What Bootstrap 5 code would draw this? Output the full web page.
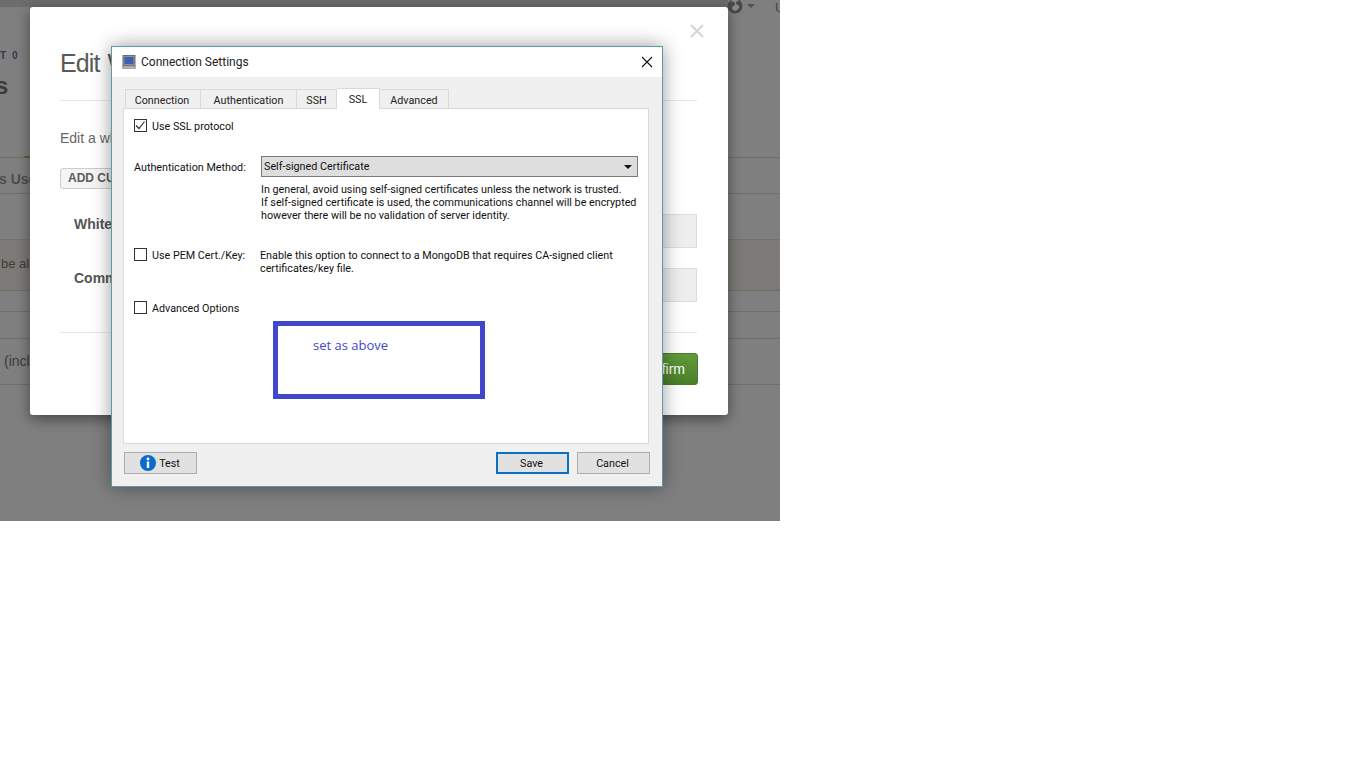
<!DOCTYPE html>
<html lang="en">
<head>
<meta charset="utf-8">
<title>Connection Settings</title>
<link rel="stylesheet" href="https://cdn.jsdelivr.net/npm/bootstrap@5.3.0/dist/css/bootstrap.min.css">
<style>
html,body{margin:0;background:#fff;}
.desk{position:relative;width:780px;height:521px;background:#7f7f7f;overflow:hidden;font-family:"Liberation Sans",sans-serif;color:#444;}
.bg-topline{height:7px;width:728px;background:#6c6c6c;}
.bg-item{position:absolute;left:0;right:0;height:1px;background:#6d6d6d;}
.bg-green{position:absolute;left:24px;top:156px;width:6px;height:2px;background:#4c6b33;}
.bg-band{position:absolute;left:0;right:0;top:239px;height:52px;background:#7c7a76;border-top:1px solid #76716a;border-bottom:1px solid #77695f;}
.bg-txt{position:absolute;color:#3b3b3b;white-space:nowrap;line-height:1;}
.bg-globe{position:absolute;left:727px;top:-1px;}
.site-modal{position:absolute;left:30px;top:7px;width:698px;height:408px;background:#fff;border-radius:3px;box-shadow:0 4px 14px rgba(0,0,0,.45);padding:30px 31px 0 30px;}
.m-title{font-family:"Liberation Sans",sans-serif;font-size:25px;line-height:1;color:#5a5a5a;margin:14px 0 0;font-weight:400;height:50px;border-bottom:1px solid #e8e8e8;letter-spacing:-.9px;word-spacing:2px;}
.m-close{position:absolute;right:24px;top:17px;}
.m-desc{font-size:14px;color:#666;margin:27px 0 0;line-height:20px;}
.m-add{display:inline-block;margin-top:20px;font-size:12px;font-weight:700;color:#5c5c5c;border:1px solid #ccc;background:#f4f4f4;border-radius:3px;padding:0 7px;height:21px;line-height:19px;}
.m-row{display:flex;justify-content:space-between;align-items:flex-start;padding-left:14px;}
.m-row b{font-size:14px;font-weight:700;color:#555;line-height:20px;}
.m-input{width:220px;height:34px;background:#eee;border:1px solid #ddd;}
.m-rows{margin-top:25px;display:flex;flex-direction:column;gap:20px;}
.m-foot{margin-top:30px;border-top:1px solid #e8e8e8;display:flex;justify-content:flex-end;padding-top:20px;}
.m-confirm{width:90px;height:32px;margin-right:-1px;background:linear-gradient(#619a3a,#4a7f2a);color:#fff;border:1px solid #4a7a2c;border-radius:3px;font-size:14px;text-align:right;padding:0 12px;line-height:30px;}
.dlg{position:absolute;left:111px;top:46px;width:552px;height:441px;background:#f0f0f0;border:1px solid #5e9aa3;box-shadow:0 0 18px rgba(0,0,0,.4);display:flex;flex-direction:column;font-family:"Roboto","Noto Sans",sans-serif;color:#111;font-size:10.75px;}
.dlg-head{height:30px;background:#fff;display:flex;align-items:center;padding:0 10px;gap:5px;flex:none;}
.dlg-head .dlg-ttl{font-size:12px;color:#222;}
.dlg-x{margin-left:auto;margin-right:-1px;}
.dlg-body{flex:1;padding:11px 13px 0 11px;display:flex;flex-direction:column;}
.dlg-tabs{display:flex;list-style:none;margin:0 0 0 2px;padding:0;height:20px;align-items:flex-end;position:relative;z-index:1;}
.dlg-tabs li{height:19px;background:#f0f0f0;border:1px solid #d9d9d9;border-bottom:0;border-left-width:0;text-align:center;line-height:22px;color:#222;}
.dlg-tabs li:first-child{border-left-width:1px;padding-right:2px;}
.dlg-tabs li.on{height:21px;background:#fff;margin-bottom:-1px;border-left:0;line-height:22px;}
.dlg-pane{height:336px;background:#fff;border:1px solid #d9d9d9;padding:10px 10px 0 10px;position:relative;}
.ck{display:flex;align-items:flex-start;gap:5px;margin:0;line-height:16px;height:14px;white-space:nowrap;}
.ck input{appearance:none;width:13px;height:13px;border:1px solid #333;background:#fff;margin:0;flex:none;}
.ck input:checked{background:#fff url("data:image/svg+xml,%3Csvg xmlns='http://www.w3.org/2000/svg' viewBox='0 0 13 13'%3E%3Cpath d='M2 6.5 5 9.5 10.5 2.5' fill='none' stroke='%23333' stroke-width='1.2'/%3E%3C/svg%3E") center/13px no-repeat;}
.row-auth{display:flex;margin-top:23px;}
.lbl-col{width:127px;flex:none;line-height:18px;white-space:nowrap;padding-top:3px;}
.fake-sel{height:21px;width:377px;background:#dedede;border:1px solid #7a7a7a;padding:1px 2px 0;line-height:20px;display:flex;align-items:center;justify-content:space-between;color:#111;}
.caret-dn{width:0;height:0;border-left:4px solid transparent;border-right:4px solid transparent;border-top:4px solid #111;margin:-1px 3px 0 0;}
.note{line-height:13px;margin:6px 0 0;white-space:nowrap;}
.row-pem{display:flex;margin-top:26px;}
.row-pem .note{margin:0;padding-top:1px;}
.row-pem .ck{width:126px;flex:none;}
.ck-adv{margin-top:26px;}
.note-box{position:absolute;left:149px;top:212px;width:212px;height:78px;border:5px solid #3f48cc;color:#3f48cc;font-family:"Open Sans",sans-serif;font-size:13px;padding:10px 0 0 35px;line-height:18px;}
.dlg-foot{display:flex;align-items:center;padding:8px 0 0 1px;}
.wbtn{height:22px;border:1px solid #adadad;background:#e1e1e1;color:#111;display:flex;align-items:center;justify-content:center;gap:3px;padding:2px 2px 0 0;border-radius:0;font-size:10.75px;}
.wbtn svg{margin:-3px 0 0 -1px;}
.wbtn-test{width:73px;padding:3px 0 0;}
.wbtn-save{width:73px;margin-left:auto;border:2px solid #0a70c4;}
.wbtn-cancel{width:73px;margin-left:8px;margin-right:-1px;}
</style>
</head>
<body>
<div class="desk">
  <div class="bg-topline"></div>
  <div class="bg-txt" style="left:0;top:51px;font-size:10px;letter-spacing:1.5px;font-weight:700;color:#2f3b55">T 0</div>
  <div class="bg-txt" style="left:-5px;top:74px;font-size:24px;font-weight:700">s</div>
  <div class="bg-item" style="top:157px"></div>
  <div class="bg-green"></div>
  <div class="bg-txt" style="left:-1px;top:172px;font-size:14px;font-weight:700;color:#4d4d4d">s Use</div>
  <div class="bg-item" style="top:193px"></div>
  <div class="bg-band"></div>
  <div class="bg-txt" style="left:1px;top:257px;font-size:13px;color:#3f3a33">be al</div>
  <div class="bg-item" style="top:311px"></div>
  <div class="bg-item" style="top:338px"></div>
  <div class="bg-txt" style="left:4px;top:354px;font-size:14px;color:#3b3b3b">(incl</div>
  <div class="bg-item" style="top:384px"></div>
  <svg class="bg-globe" width="40" height="16" viewBox="0 0 40 16" aria-hidden="true"><circle cx="8" cy="7" r="7.5" fill="#4a4a4a"/><path d="M3 3c3-1 5 0 5 2s-3 2-3 4 2 3 4 3c2-2 4-3 3-5s-3-1-3-3 2-2 3-3c-3-2-7-1-9 2z" fill="#8a8a8a"/><path d="M20 5h8l-4 4z" fill="#4f4f4f"/></svg>
  <div class="bg-txt" style="left:775px;top:1px;font-size:13px;color:#444">U</div>

  <div class="site-modal">
    <svg class="m-close" width="14" height="14" viewBox="0 0 14 14" aria-hidden="true"><path d="M1 1 13 13M13 1 1 13" stroke="#d4d4d4" stroke-width="2"/></svg>
    <h4 class="m-title">Edit W</h4>
    <p class="m-desc">Edit a whitelist</p>
    <span class="m-add">ADD CUSTOM</span>
    <div class="m-rows">
      <div class="m-row"><b>Whitelist</b><div class="m-input"></div></div>
      <div class="m-row"><b>Comment</b><div class="m-input"></div></div>
    </div>
    <div class="m-foot"><div class="m-confirm">Confirm</div></div>
  </div>

  <div class="dlg">
    <div class="dlg-head">
      <svg width="14" height="14" viewBox="0 0 14 14" aria-hidden="true"><rect x="1" y="0.5" width="12" height="10" fill="#8d9199" stroke="#6a6e75"/><rect x="2.5" y="2" width="9" height="7" fill="#3f5fb5"/><rect x="0.5" y="11" width="13" height="2.5" fill="#b4b6ba" stroke="#85888d" stroke-width=".6"/></svg>
      <span class="dlg-ttl">Connection Settings</span>
      <svg class="dlg-x" width="12" height="12" viewBox="0 0 12 12" aria-hidden="true"><path d="M1 1 11 11M11 1 1 11" stroke="#111" stroke-width="1.1"/></svg>
    </div>
    <div class="dlg-body">
      <ul class="dlg-tabs">
        <li style="width:76px">Connection</li>
        <li style="width:96px">Authentication</li>
        <li style="width:40px">SSH</li>
        <li class="on" style="width:43px">SSL</li>
        <li style="width:69px">Advanced</li>
      </ul>
      <div class="dlg-pane">
        <label class="ck"><input type="checkbox" checked> Use SSL protocol</label>
        <div class="row-auth">
          <div class="lbl-col">Authentication Method:</div>
          <div>
            <div class="fake-sel">Self-signed Certificate<span class="caret-dn"></span></div>
            <p class="note">In general, avoid using self-signed certificates unless the network is trusted.<br>If self-signed certificate is used, the communications channel will be encrypted<br>however there will be no validation of server identity.</p>
          </div>
        </div>
        <div class="row-pem">
          <label class="ck"><input type="checkbox"> Use PEM Cert./Key:</label>
          <p class="note">Enable this option to connect to a MongoDB that requires CA-signed client<br>certificates/key file.</p>
        </div>
        <label class="ck ck-adv"><input type="checkbox"> Advanced Options</label>
        <div class="note-box">set as above</div>
      </div>
      <div class="dlg-foot">
        <button type="button" class="wbtn wbtn-test">
          <svg width="16" height="16" viewBox="0 0 16 16" aria-hidden="true"><circle cx="8" cy="8" r="8" fill="#0a6cc8"/><circle cx="8" cy="4" r="1.4" fill="#fff"/><rect x="6.8" y="6.5" width="2.4" height="6.5" fill="#fff"/></svg>
          Test
        </button>
        <button type="button" class="wbtn wbtn-save">Save</button>
        <button type="button" class="wbtn wbtn-cancel">Cancel</button>
      </div>
    </div>
  </div>
</div>
<script src="https://cdn.jsdelivr.net/npm/bootstrap@5.3.0/dist/js/bootstrap.bundle.min.js"></script>
</body>
</html>
